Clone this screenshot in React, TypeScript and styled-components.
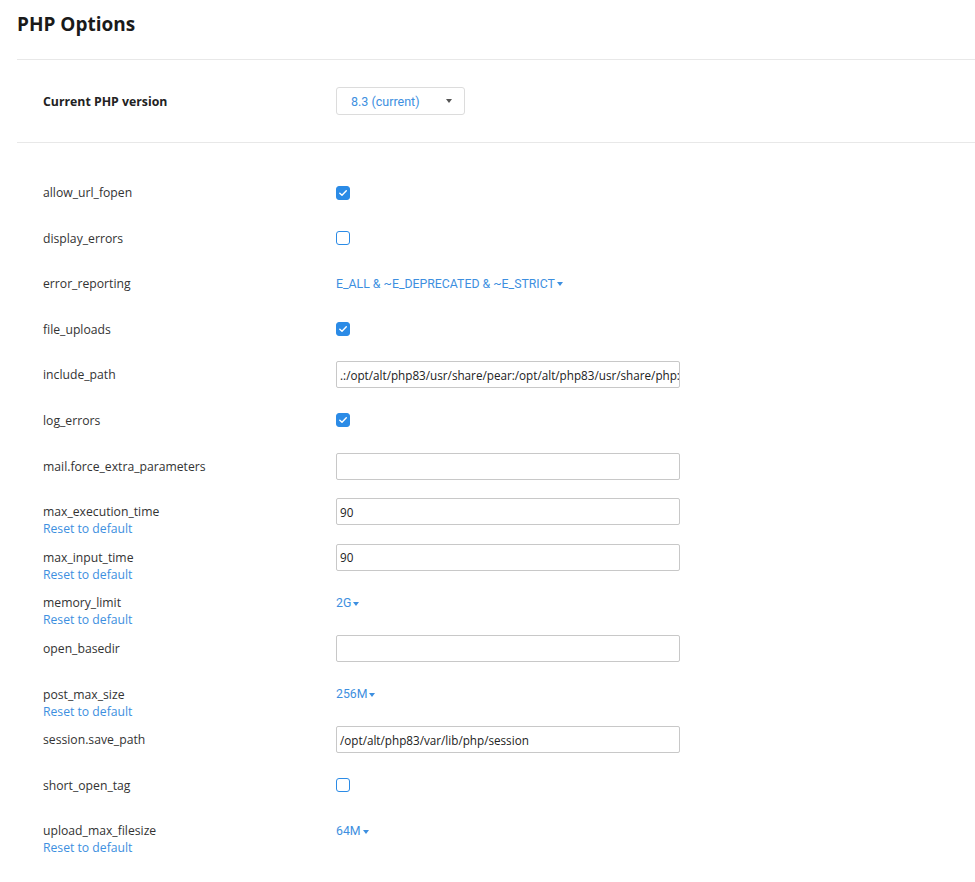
import React from "react"
import styled, { createGlobalStyle } from "styled-components"

const Global = createGlobalStyle`
  body { margin: 0; background: #fff; font-family: "Open Sans", "Noto Sans", sans-serif; color: #333; }
`

const Page = styled.div`
  padding: 0 0 0 17px;
`

const Title = styled.h1`
  margin: 0;
  padding-top: 10px;
  height: 49px;
  font-size: 19px;
  font-weight: 700;
  color: #1a1a1a;
  line-height: 28px;
`

const Divider = styled.div`
  border-top: 1px solid #e8e8e8;
`

const VersionRow = styled.div`
  display: grid;
  grid-template-columns: 293px 1fr;
  align-items: center;
  padding: 0 26px;
  height: 82px;
`

const VersionLabel = styled.div`
  font-size: 12.3px;
  font-weight: 700;
  color: #222;
`

const Select = styled.div`
  width: 129px;
  height: 28px;
  box-sizing: border-box;
  border: 1px solid #dcdcdc;
  border-radius: 3px;
  display: flex;
  align-items: center;
  justify-content: space-between;
  padding: 0 12px 0 14px;
  font-family: Roboto, sans-serif;
  font-size: 12.5px;
  color: #3d8fe0;
`

const Caret = styled.span<{ $color?: string }>`
  display: inline-block;
  width: 0;
  height: 0;
  border-left: 3.5px solid transparent;
  border-right: 3.5px solid transparent;
  border-top: 4px solid ${(p) => p.$color || "#3d8fe0"};
  margin-left: 2px;
  vertical-align: middle;
`

const List = styled.div`
  display: grid;
  grid-auto-rows: 45.6px;
  padding: 36px 26px 0;
`

const Row = styled.div`
  display: grid;
  grid-template-columns: 293px 1fr;
  align-items: start;
`

const LabelCol = styled.div`
  font-size: 12.2px;
  line-height: 27px;
  color: #333;
`

const Reset = styled.a`
  display: block;
  margin-top: -5px;
  line-height: 17px;
  font-size: 12.2px;
  color: #3d8fe0;
  text-decoration: none;
`

const Control = styled.div`
  height: 27px;
  display: flex;
  align-items: center;
`

const Box = styled.span<{ $checked: boolean }>`
  width: 14px;
  height: 14px;
  box-sizing: border-box;
  border-radius: 3px;
  border: 1.5px solid #2b8be6;
  background: ${(p) => (p.$checked ? "#2b8be6" : "#fff")};
  display: flex;
  align-items: center;
  justify-content: center;
`

const Input = styled.div`
  width: 344px;
  height: 27px;
  box-sizing: border-box;
  border: 1px solid #c8c8c8;
  border-radius: 2px;
  padding: 0 3px;
  display: flex;
  align-items: center;
  font-size: 11.7px;
  color: #222;
  white-space: nowrap;
  overflow: hidden;
`

const Drop = styled.span`
  font-family: Roboto, sans-serif;
  font-size: 12.3px;
  color: #3d8fe0;
`

type Opt =
  | { name: string; kind: "check"; value: boolean; reset?: boolean }
  | { name: string; kind: "input" | "drop"; value: string; reset?: boolean }

const options: Opt[] = [
  { name: "allow_url_fopen", kind: "check", value: true },
  { name: "display_errors", kind: "check", value: false },
  { name: "error_reporting", kind: "drop", value: "E_ALL & ~E_DEPRECATED & ~E_STRICT" },
  { name: "file_uploads", kind: "check", value: true },
  { name: "include_path", kind: "input", value: ".:/opt/alt/php83/usr/share/pear:/opt/alt/php83/usr/share/php:/u" },
  { name: "log_errors", kind: "check", value: true },
  { name: "mail.force_extra_parameters", kind: "input", value: "" },
  { name: "max_execution_time", kind: "input", value: "90", reset: true },
  { name: "max_input_time", kind: "input", value: "90", reset: true },
  { name: "memory_limit", kind: "drop", value: "2G", reset: true },
  { name: "open_basedir", kind: "input", value: "" },
  { name: "post_max_size", kind: "drop", value: "256M", reset: true },
  { name: "session.save_path", kind: "input", value: "/opt/alt/php83/var/lib/php/session" },
  { name: "short_open_tag", kind: "check", value: false },
  { name: "upload_max_filesize", kind: "drop", value: "64M", reset: true },
]

function renderControl(o: Opt) {
  if (o.kind === "check") {
    return (
      <Box $checked={o.value}>
        {o.value && (
          <svg width="10" height="10" viewBox="0 0 10 10">
            <path d="M1.8 5.2 4 7.3 8.3 2.7" fill="none" stroke="#fff" strokeWidth="1.4" strokeLinecap="round" strokeLinejoin="round" />
          </svg>
        )}
      </Box>
    )
  }
  if (o.kind === "input") return <Input>{o.value}</Input>
  return (
    <Drop>
      {o.value}
      <Caret />
    </Drop>
  )
}

export default function App() {
  return (
    <>
      <Global />
      <Page>
        <Title>PHP Options</Title>
        <Divider />
        <VersionRow>
          <VersionLabel>Current PHP version</VersionLabel>
          <Select>
            8.3 (current)
            <Caret $color="#555" />
          </Select>
        </VersionRow>
        <Divider />
        <List>
          {options.map((o) => (
            <Row key={o.name}>
              <LabelCol>
                {o.name}
                {o.reset && <Reset href="#">Reset to default</Reset>}
              </LabelCol>
              <Control>{renderControl(o)}</Control>
            </Row>
          ))}
        </List>
      </Page>
    </>
  )
}
